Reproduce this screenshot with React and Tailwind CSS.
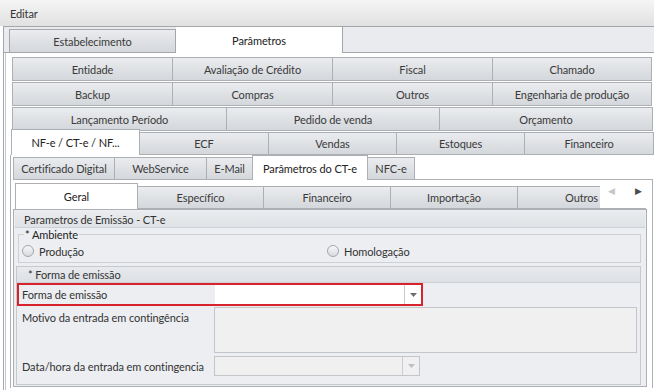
import React from 'react';

const tabIdle =
  'flex items-center justify-center shrink-0 whitespace-nowrap border border-[#acafb3] -ml-px first:ml-0 bg-linear-to-b from-[#eaecef] to-[#d4d7db] text-[#3a3a3a]';
const tabOn =
  'flex items-center justify-center shrink-0 whitespace-nowrap border border-b-0 border-[#acafb3] -ml-px first:ml-0 bg-white text-[#222]';

function Row({ tabs }) {
  return (
    <div className="flex">
      {tabs.map(([label, w]) => (
        <div key={label} className={`${tabIdle} h-[24px]`} style={{ width: w }}>
          {label}
        </div>
      ))}
    </div>
  );
}

function Radio({ label }) {
  return (
    <div className="flex items-center gap-[5px]">
      <span className="w-[12px] h-[12px] rounded-full border border-[#a3a7ac] bg-linear-to-b from-[#f6f7f8] to-[#d8dbde]" />
      <span>{label}</span>
    </div>
  );
}

function Arrow({ muted }) {
  return (
    <div className={`w-[17px] h-full flex items-center justify-center border-l border-[#c9ccd0] ${muted ? 'text-[#bcbfc3]' : 'text-[#6b6e72]'}`}>
      <svg width="7" height="4" viewBox="0 0 7 4">
        <path d="M0 0h7L3.5 4z" fill="currentColor" />
      </svg>
    </div>
  );
}

export default function App() {
  return (
    <div className="w-[654px] h-[390px] overflow-hidden bg-white text-[11px] tracking-[-0.1px] leading-none text-[#333] font-['Lato',sans-serif]">
      {/* barra do título */}
      <div className="h-[26px] pl-[10px] flex items-center bg-linear-to-b from-[#f5f5f5] to-[#e1e1e1]">Editar</div>

      <div className="ml-[3px] h-[364px] border-l border-t border-[#a3a6aa] flex flex-col">
        {/* abas principais */}
        <div className="h-[26px] flex items-end bg-[#e9ebee] border-b border-[#a3a6aa]">
          <div className="ml-[5px] w-[167px] h-[23px] flex items-center justify-center border border-b-0 border-[#a3a6aa] bg-linear-to-b from-[#eaecef] to-[#d4d7db] text-[#3a3a3a]">
            Estabelecimento
          </div>
          <div className="w-[167px] h-[26px] -mb-px flex items-center justify-center border-r border-[#a3a6aa] bg-white text-[#222]">
            Parâmetros
          </div>
        </div>

        <div className="flex-1 bg-white pl-[4px] pt-[4px] border-l border-[#c4c7cb] ml-[1px]">
          <div className="flex flex-col gap-[1px] ml-[2px] w-[640px]">
            <Row tabs={[['Entidade', 161], ['Avaliação de Crédito', 161], ['Fiscal', 161], ['Chamado', 160]]} />
            <Row tabs={[['Backup', 161], ['Compras', 161], ['Outros', 161], ['Engenharia de produção', 160]]} />
            <Row tabs={[['Lançamento Período', 215], ['Pedido de venda', 214], ['Orçamento', 214]]} />
          </div>

          {/* linha NF-e */}
          <div className="flex items-end h-[26px] w-[644px] -mt-[2px]">
            <div className="ml-[1px] w-[129px] h-[26px] flex items-center justify-center border-l border-t border-r border-[#acafb3] bg-white text-[#222]">
              NF-e / CT-e / NF...
            </div>
            <div className={`${tabIdle} h-[23px]`} style={{ width: 130 }}>ECF</div>
            <div className={`${tabIdle} h-[23px]`} style={{ width: 129 }}>Vendas</div>
            <div className={`${tabIdle} h-[23px]`} style={{ width: 129 }}>Estoques</div>
            <div className={`${tabIdle} h-[23px]`} style={{ width: 130 }}>Financeiro</div>
          </div>

          {/* painel NF-e */}
          <div className="border-l border-[#acafb3] w-[643px] h-[233px] pl-[2px] pt-[1px]">
            <div className="flex items-end h-[24px] border-b border-[#acafb3] w-[640px]">
              <div className={`${tabIdle} h-[22px] border-b-0 ml-[1px]`} style={{ width: 102 }}>Certificado Digital</div>
              <div className={`${tabIdle} h-[22px] border-b-0`} style={{ width: 93 }}>WebService</div>
              <div className={`${tabIdle} h-[22px] border-b-0`} style={{ width: 47 }}>E-Mail</div>
              <div className={`${tabOn} h-[25px] -mb-px`} style={{ width: 116 }}>Parâmetros do CT-e</div>
              <div className={`${tabIdle} h-[22px] border-b-0`} style={{ width: 48 }}>NFC-e</div>
            </div>

            {/* painel CT-e */}
            <div className="border-r border-[#acafb3] h-[208px] pt-[3px] w-[640px]">
              <div className="flex items-end h-[26px] pl-[2px]">
                <div className={`${tabOn} h-[26px]`} style={{ width: 123 }}>Geral</div>
                <div className={`${tabIdle} h-[23px]`} style={{ width: 127 }}>Específico</div>
                <div className={`${tabIdle} h-[23px]`} style={{ width: 128 }}>Financeiro</div>
                <div className={`${tabIdle} h-[23px]`} style={{ width: 128 }}>Importação</div>
                <div className={`${tabIdle} h-[23px] border-r-0 justify-end pr-[2px]`} style={{ width: 83 }}>Outros</div>
                <div className="w-[46px] h-[26px] bg-white border-b border-[#acafb3] flex items-start pl-[8px] pt-[3px] gap-[20px] text-[9px]">
                  <span className="text-[#c4c6c9]">◀</span>
                  <span className="text-[#4a4d50]">▶</span>
                </div>
              </div>

              {/* conteúdo */}
              <div className="h-[178px] w-[634px] border border-[#acafb3] bg-[#eceef1] p-[1px] flex flex-col">
                <div className="h-[17px] pl-[9px] flex items-center border-b border-[#cdd0d4] bg-linear-to-b from-[#eaecef] to-[#dfe2e6]">
                  Parametros de Emissão - CT-e
                </div>

                <div className="pl-[3px] pr-[4px]">
                  <fieldset className="mt-[1px] h-[34px] border border-[#cdd0d4] pl-[3px]">
                    <legend className="ml-[2px] px-[1px] text-[#222]">* Ambiente</legend>
                    <div className="flex pt-[5px]">
                      <div className="w-[305px]"><Radio label="Produção" /></div>
                      <Radio label="Homologação" />
                    </div>
                  </fieldset>
                </div>

                <div className="mt-[3px] ml-[1px] mr-[4px] flex-1 border border-[#c5c8cc] flex flex-col">
                  <div className="h-[16px] pl-[11px] flex items-center border-b border-[#cdd0d4] bg-linear-to-b from-[#e8eaed] to-[#dde0e4]">
                    * Forma de emissão
                  </div>

                  <div className="w-[406px] h-[23px] border-2 border-[#d6232c] flex items-center">
                    <div className="w-[196px] pl-[3px] whitespace-nowrap">Forma de emissão</div>
                    <div className="flex-1 h-full bg-white flex justify-end">
                      <Arrow />
                    </div>
                  </div>

                  <div className="flex mt-[1px]">
                    <div className="w-[197px] pl-[5px] pt-[5px] whitespace-nowrap">Motivo da entrada em contingência</div>
                    <div className="w-[423px] h-[46px] border border-[#c2c5c9] bg-[#f0f0f0]" />
                  </div>

                  <div className="flex items-center mt-[3px]">
                    <div className="w-[197px] pl-[5px] whitespace-nowrap">Data/hora da entrada em contingencia</div>
                    <div className="w-[206px] h-[20px] border border-[#c2c5c9] bg-[#f0f0f0] flex justify-end">
                      <Arrow muted />
                    </div>
                  </div>
                </div>
              </div>
            </div>
          </div>
        </div>
      </div>
    </div>
  );
}
